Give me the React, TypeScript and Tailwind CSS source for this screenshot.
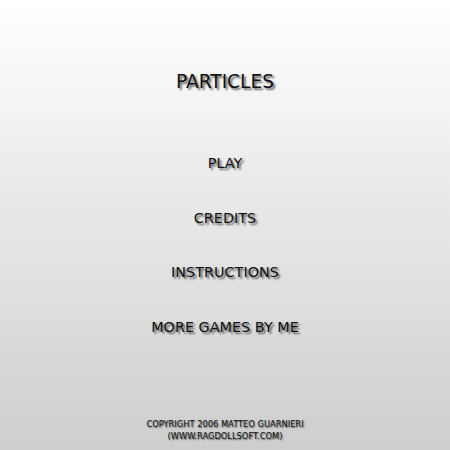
import React from 'react';

const menuItems = ['PLAY', 'CREDITS', 'INSTRUCTIONS', 'MORE GAMES BY ME'];

const shadow = '[text-shadow:2px_2px_2px_rgba(0,0,0,0.6)]';

const App = () => {
  return (
    <div className="w-[450px] h-[450px] flex flex-col items-center bg-linear-to-b from-white to-[#cecece] font-['DejaVu_Sans',Verdana,sans-serif] text-[#111] select-none">
      <h1 className={`mt-[72px] text-[18.6px] leading-[20px] ${shadow}`}>PARTICLES</h1>

      <nav className="mt-[61px] flex flex-col items-center gap-[34.7px]">
        {menuItems.map((item) => (
          <button key={item} className={`text-[14.4px] leading-[20px] cursor-pointer ${shadow}`}>
            {item}
          </button>
        ))}
      </nav>

      <footer className="mt-auto pb-[8px] flex flex-col items-center text-[8.3px] leading-[12px] [text-shadow:1px_1px_1.5px_rgba(0,0,0,0.6)]">
        <span>COPYRIGHT 2006 MATTEO GUARNIERI</span>
        <span>(WWW.RAGDOLLSOFT.COM)</span>
      </footer>
    </div>
  );
};

export default App;
